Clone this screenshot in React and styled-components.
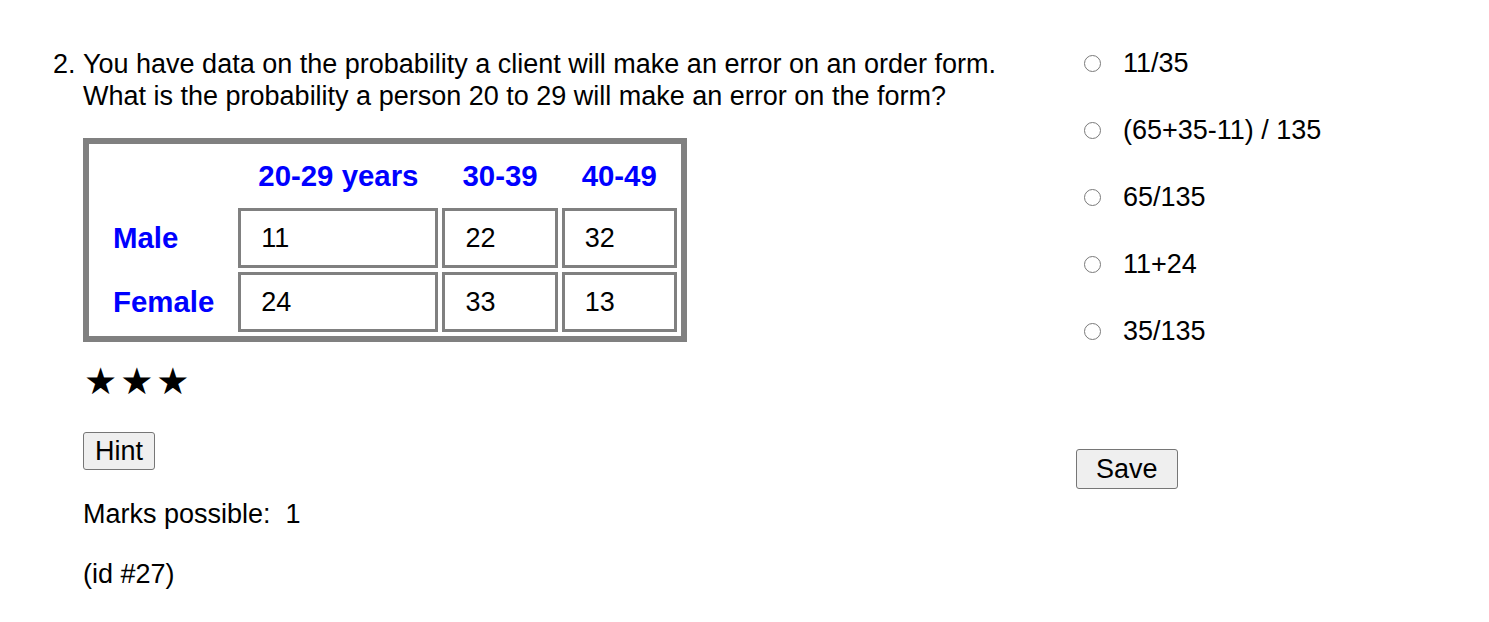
import React from 'react';
import styled, { createGlobalStyle } from 'styled-components';

const GlobalStyle = createGlobalStyle`
  body {
    margin: 0;
    background: #fff;
    color: #000;
    font-family: "Liberation Sans", Arial, sans-serif;
    font-size: 27px;
  }
`;

const Page = styled.div`
  display: flex;
  align-items: flex-start;
  padding-top: 48px;
`;

const LeftCol = styled.div`
  flex: 0 0 1076px;
  box-sizing: border-box;
`;

const QuestionList = styled.ol`
  margin: 0;
  padding-left: 83px;
  line-height: 32px;
`;

const QuestionText = styled.p`
  margin: 0 0 26px 0;
`;

const DataTable = styled.table`
  border: 6px solid #808080;
  border-spacing: 4px;
  margin-bottom: 18px;
`;

const HeadCell = styled.th`
  color: #0000ff;
  font-size: 29.4px;
  font-weight: bold;
  line-height: 34px;
  padding: 11px 20px;
  text-align: ${p => (p.$left ? 'left' : 'center')};
`;

const Cell = styled.td`
  border: 3px solid #808080;
  padding: 11px 20px;
  line-height: 32px;
  font-size: 27px;
`;

const Stars = styled.div`
  font-family: "DejaVu Sans", sans-serif;
  font-size: 37px;
  line-height: 44px;
  letter-spacing: 3px;
  margin-left: 1px;
  margin-bottom: 28px;
`;

const Button = styled.button`
  display: block;
  font-family: "Liberation Sans", Arial, sans-serif;
  font-size: 27px;
  line-height: 32px;
  color: #000;
  background: #efefef;
  border: 1px solid #767676;
  border-radius: 3px;
  padding: ${p => (p.$wide ? '3px 19px' : '2px 11px')};
  cursor: pointer;
`;

const Line = styled.p`
  margin: 29px 0 0 0;
  line-height: 31px;
`;

const RightCol = styled.div`
  flex: 1;
  display: flex;
  flex-direction: column;
  align-items: flex-start;
`;

const Options = styled.div`
  display: flex;
  flex-direction: column;
  gap: 36px;
  margin-bottom: 102px;
`;

const Option = styled.label`
  position: relative;
  display: flex;
  align-items: center;
  line-height: 31px;
  cursor: pointer;
`;

const HiddenRadio = styled.input`
  position: absolute;
  opacity: 0;
  width: 1px;
  height: 1px;
  margin: 0;
`;

const RadioMark = styled.span`
  display: inline-block;
  flex: 0 0 auto;
  width: 17px;
  height: 17px;
  margin: 0 22px 0 8px;
  border: 1.5px solid #7a7a7a;
  border-radius: 50%;
  background: #fff;
  box-sizing: border-box;
`;

const options = ['11/35', '(65+35-11) / 135', '65/135', '11+24', '35/135'];

const rows = [
  { label: 'Male', values: ['11', '22', '32'] },
  { label: 'Female', values: ['24', '33', '13'] },
];

export default function App() {
  return (
    <>
      <GlobalStyle />
      <Page>
        <LeftCol>
          <QuestionList start={2}>
            <li>
              <QuestionText>
                You have data on the probability a client will make an error on an order form.
                <br />
                What is the probability a person 20 to 29 will make an error on the form?
              </QuestionText>
              <DataTable>
                <thead>
                  <tr>
                    <HeadCell />
                    <HeadCell>20-29 years</HeadCell>
                    <HeadCell>30-39</HeadCell>
                    <HeadCell>40-49</HeadCell>
                  </tr>
                </thead>
                <tbody>
                  {rows.map(r => (
                    <tr key={r.label}>
                      <HeadCell $left>{r.label}</HeadCell>
                      {r.values.map((v, i) => (
                        <Cell key={i}>{v}</Cell>
                      ))}
                    </tr>
                  ))}
                </tbody>
              </DataTable>
              <Stars>★★★</Stars>
              <Button>Hint</Button>
              <Line>Marks possible:&nbsp; 1</Line>
              <Line>(id #27)</Line>
            </li>
          </QuestionList>
        </LeftCol>
        <RightCol>
          <Options>
            {options.map(o => (
              <Option key={o}>
                <HiddenRadio type="radio" name="answer" />
                <RadioMark />
                {o}
              </Option>
            ))}
          </Options>
          <Button $wide>Save</Button>
        </RightCol>
      </Page>
    </>
  );
}
